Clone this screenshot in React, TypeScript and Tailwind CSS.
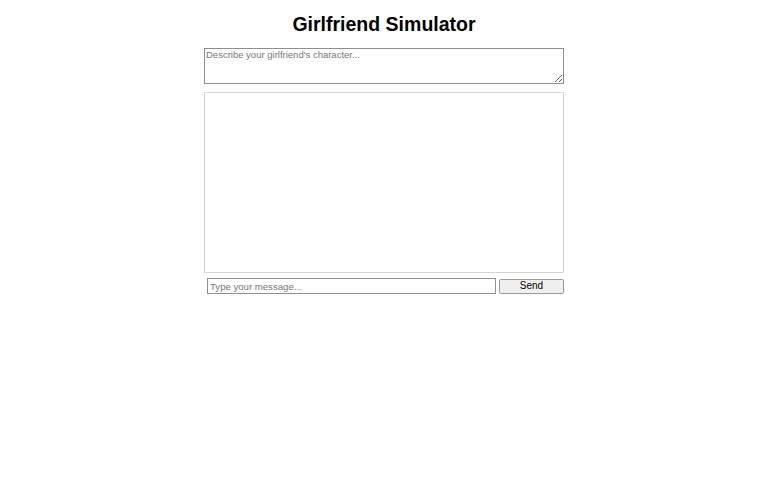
export default function App() {
  return (
    <div className="min-h-[480px] bg-white font-['Liberation_Sans',Arial,sans-serif] text-black">
      <div className="mx-auto flex w-[360px] flex-col pt-[13px]">
        <h1 className="text-center text-[19.5px] font-bold leading-[22px]">Girlfriend Simulator</h1>
        <textarea
          className="mt-[13px] h-[36px] w-full resize-y border border-[#8f8f8f] px-[1px] py-0 text-[9.5px] leading-[12px] placeholder:text-[#777]"
          placeholder="Describe your girlfriend's character..."
        />
        <div className="mt-[8px] h-[181px] border border-[#d4d4d4]" />
        <div className="mt-[5px] flex items-center gap-[3px] pl-[3px]">
          <input
            className="h-[16px] w-[289px] border border-[#8f8f8f] px-[2px] text-[9.6px] placeholder:text-[#777]"
            placeholder="Type your message..."
          />
          <button className="h-[15px] flex-1 rounded-[2px] border border-[#999] bg-[#efefef] text-[10px] leading-none">
            Send
          </button>
        </div>
      </div>
    </div>
  );
}
